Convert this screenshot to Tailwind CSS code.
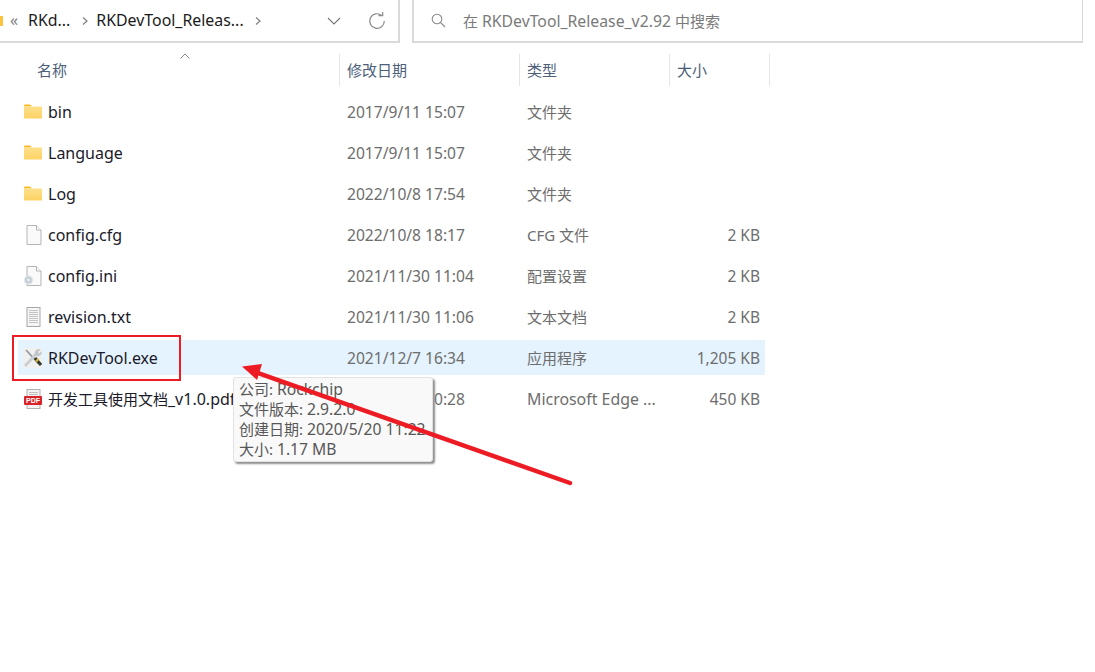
<!DOCTYPE html>
<html lang="zh-CN">
<head>
  <meta charset="UTF-8">
  <title>RKDevTool_Release_v2.92</title>
  <script src="https://cdn.jsdelivr.net/npm/@tailwindcss/browser@4"></script>
</head>
<body class="bg-white w-[1095px] h-[672px] overflow-hidden relative font-['Noto_Sans','Noto_Sans_CJK_SC',sans-serif] text-[15px]">

  <!-- top bar -->
  <div class="flex h-[43px] gap-[12px]">
    <div class="w-[400px] border-r-2 border-b-2 border-[#d9d9d9] flex items-center relative text-[#1a1a1a] text-[15.9px]">
      <div class="w-[3px] h-[10px] bg-[#fcc33d] mt-[1px]"></div>
      <span class="ml-[7px] text-[#808080] w-[18px]">«</span>
      <span>RKd...</span>
      <svg class="ml-[11px]" width="8" height="10" viewBox="0 0 8 10"><path d="M2 1.5 L6 5 L2 8.5" fill="none" stroke="#808080" stroke-width="1.2"/></svg>
      <span class="ml-[7px]">RKDevTool_Releas...</span>
      <svg class="ml-[10px]" width="8" height="10" viewBox="0 0 8 10"><path d="M2 1.5 L6 5 L2 8.5" fill="none" stroke="#808080" stroke-width="1.2"/></svg>
      <svg class="ml-[65px]" width="14" height="8" viewBox="0 0 14 8"><path d="M1 1 L7 7 L13 1" fill="none" stroke="#777" stroke-width="1.1"/></svg>
      <svg class="ml-[27px]" width="18" height="18" viewBox="0 0 18 18"><path d="M13.6 3.4 A7.3 7.3 0 1 0 16.3 9" fill="none" stroke="#8a8a8a" stroke-width="1.2"/><path d="M10.5 3.7 H14.7 V0" fill="none" stroke="#8a8a8a" stroke-width="1.2"/></svg>
    </div>
    <div class="w-[671px] border-l-2 border-b-2 border-r border-[#d9d9d9] flex items-center text-[#7a7a7a] pl-[17px]">
      <svg width="15" height="15" viewBox="0 0 15 15"><circle cx="6" cy="6" r="4.8" fill="none" stroke="#8a8a8a" stroke-width="1.1"/><path d="M9.5 9.5 L14 14" stroke="#8a8a8a" stroke-width="1.1"/></svg>
      <span class="ml-[17px] pt-[2px] whitespace-nowrap">在 <span class="text-[15.8px]">RKDevTool_Release_v2.92</span> 中搜索</span>
    </div>
  </div>

  <!-- column headers -->
  <div class="relative flex h-[32px] mt-[11px] text-[#4c607a]">
    <div class="w-[340px] border-r border-[#e5e5e5] pl-[37px] flex items-center">名称</div>
    <svg class="absolute left-[180px] top-[-1px]" width="10" height="6" viewBox="0 0 10 6"><path d="M0.5 5.5 L5 1 L9.5 5.5" fill="none" stroke="#8a8a8a"/></svg>
    <div class="w-[180px] border-r border-[#e5e5e5] pl-[7px] flex items-center">修改日期</div>
    <div class="w-[150px] border-r border-[#e5e5e5] pl-[7px] flex items-center">类型</div>
    <div class="w-[100px] border-r border-[#e5e5e5] pl-[7px] flex items-center">大小</div>
  </div>

  <!-- file list -->
  <div class="mt-[8px] ml-[18px] w-[747px] flex flex-col gap-[6px] text-[#6d6d6d]">
    <div class="flex items-center h-[35px] pt-[2px]">
      <svg class="ml-[6px] mb-[3px] w-[18px]" width="18" height="15" viewBox="0 0 18 15"><defs><linearGradient id="fld" x1="0" y1="0" x2="0" y2="1"><stop offset="0" stop-color="#fde08a"/><stop offset="1" stop-color="#fdd264"/></linearGradient></defs><path d="M0 1.5 Q0 0.5 1 0.5 H6 L8 2.5 H0 Z" fill="#fbb924"/><rect y="2.5" width="18" height="12" rx="0.5" fill="url(#fld)"/></svg>
      <span class="ml-[6px] mb-[2px] w-[299px] text-[16px] text-[#1a1a2a]">bin</span>
      <span class="w-[180px] text-[15.6px]">2017/9/11 15:07</span>
      <span class="w-[150px]">文件夹</span>
    </div>
    <div class="flex items-center h-[35px] pt-[2px]">
      <svg class="ml-[6px] mb-[3px] w-[18px]" width="18" height="15" viewBox="0 0 18 15"><path d="M0 1.5 Q0 0.5 1 0.5 H6 L8 2.5 H0 Z" fill="#fbb924"/><rect y="2.5" width="18" height="12" rx="0.5" fill="url(#fld)"/></svg>
      <span class="ml-[6px] mb-[2px] w-[299px] text-[16px] text-[#1a1a2a]">Language</span>
      <span class="w-[180px] text-[15.6px]">2017/9/11 15:07</span>
      <span class="w-[150px]">文件夹</span>
    </div>
    <div class="flex items-center h-[35px] pt-[2px]">
      <svg class="ml-[6px] mb-[3px] w-[18px]" width="18" height="15" viewBox="0 0 18 15"><path d="M0 1.5 Q0 0.5 1 0.5 H6 L8 2.5 H0 Z" fill="#fbb924"/><rect y="2.5" width="18" height="12" rx="0.5" fill="url(#fld)"/></svg>
      <span class="ml-[6px] mb-[2px] w-[299px] text-[16px] text-[#1a1a2a]">Log</span>
      <span class="w-[180px] text-[15.6px]">2022/10/8 17:54</span>
      <span class="w-[150px]">文件夹</span>
    </div>
    <div class="flex items-center h-[35px] pt-[2px]">
      <svg class="ml-[8px] mb-[2px] w-[16px]" width="16" height="20" viewBox="0 0 16 20"><path d="M1 0.5 H10.5 L15 5 V19.5 H1 Z" fill="#fafafa" stroke="#b5b5b5"/><path d="M10.5 0.5 V5 H15" fill="#fff" stroke="#b5b5b5"/></svg>
      <span class="ml-[6px] mb-[2px] w-[299px] text-[16px] text-[#1a1a2a]">config.cfg</span>
      <span class="w-[180px] text-[15.6px]">2022/10/8 18:17</span>
      <span class="w-[150px]">CFG 文件</span>
      <span class="w-[83px] text-right text-[15.5px]">2 KB</span>
    </div>
    <div class="flex items-center h-[35px] pt-[2px]">
      <svg class="ml-[5px] mb-[2px] w-[19px]" width="19" height="20" viewBox="0 0 19 20"><path d="M4 0.5 H13.5 L18 5 V19.5 H4 Z" fill="#fafafa" stroke="#b5b5b5"/><path d="M13.5 0.5 V5 H18" fill="#fff" stroke="#b5b5b5"/><circle cx="5.5" cy="14" r="4" fill="#c3ccd4" stroke="#e2e7ea" stroke-width="1.6" stroke-dasharray="2 1"/><circle cx="5.5" cy="14" r="1.4" fill="#eef1f3"/></svg>
      <span class="ml-[6px] mb-[2px] w-[299px] text-[16px] text-[#1a1a2a]">config.ini</span>
      <span class="w-[180px] text-[15.6px]">2021/11/30 11:04</span>
      <span class="w-[150px]">配置设置</span>
      <span class="w-[83px] text-right text-[15.5px]">2 KB</span>
    </div>
    <div class="flex items-center h-[35px] pt-[2px]">
      <svg class="ml-[8px] mb-[2px] w-[16px]" width="16" height="20" viewBox="0 0 16 20"><rect x="1" y="0.5" width="13" height="19" fill="#f5f5f5" stroke="#a8a8a8"/><path d="M3 3.5 H12 M3 5.5 H12 M3 7.5 H12 M3 9.5 H12 M3 11.5 H12 M3 13.5 H12 M3 15.5 H12" stroke="#c4c4c4"/></svg>
      <span class="ml-[6px] mb-[2px] w-[299px] text-[16px] text-[#1a1a2a]">revision.txt</span>
      <span class="w-[180px] text-[15.6px]">2021/11/30 11:06</span>
      <span class="w-[150px]">文本文档</span>
      <span class="w-[83px] text-right text-[15.5px]">2 KB</span>
    </div>
    <div class="flex items-center h-[35px] pt-[2px] bg-[#e5f3ff]">
      <svg class="ml-[5px] mb-[2px] w-[19px]" width="19" height="20" viewBox="0 0 19 20"><rect width="19" height="20" fill="#f0f1ee"/><path d="M3 2 L16 16" stroke="#8f9aa3" stroke-width="1.8"/><path d="M12 10 L18 17" stroke="#3a3a2a" stroke-width="3.2"/><path d="M13.5 11.5 L15 13" stroke="#e3b53a" stroke-width="3.2"/><path d="M2 18 L14 5" stroke="#c9ced2" stroke-width="2.6"/><path d="M12 6.5 A4 4 0 0 1 17.5 1.5 L15 4 L16.5 5.5 L18.6 3 A4 4 0 0 1 13.5 8 Z" fill="#c0c6cb"/></svg>
      <span class="ml-[6px] mb-[2px] w-[299px] text-[16px] text-[#1a1a2a]">RKDevTool.exe</span>
      <span class="w-[180px] text-[15.6px]">2021/12/7 16:34</span>
      <span class="w-[150px]">应用程序</span>
      <span class="w-[83px] text-right text-[15.5px]">1,205 KB</span>
    </div>
    <div class="flex items-center h-[35px] pt-[2px]">
      <svg class="ml-[6px] mb-[2px] w-[18px]" width="18" height="20" viewBox="0 0 18 20"><rect x="3" y="0.5" width="13" height="19" fill="#f2f2f2" stroke="#b0b0b0"/><path d="M5 3.5 H14 M5 5.5 H14" stroke="#c0c0c0"/><rect y="7" width="18" height="9" rx="1" fill="#d8232a"/><text x="9" y="14" text-anchor="middle" font-size="7" font-weight="700" font-family="Liberation Sans" fill="#fff">PDF</text></svg>
      <span class="ml-[6px] mb-[2px] w-[299px] text-[#1a1a2a] whitespace-nowrap">开发工具使用文档<span class="text-[16px]">_v1.0.pdf</span></span>
      <span class="w-[180px] text-[15.6px]">2021/12/7 10:28</span>
      <span class="w-[150px] text-[15.9px] whitespace-nowrap">Microsoft Edge ...</span>
      <span class="w-[83px] text-right text-[15.5px]">450 KB</span>
    </div>
  </div>

  <!-- tooltip -->
  <div class="absolute left-[233px] top-[377px] w-[200px] h-[85px] bg-[#f9f9f9] border border-[#e2e2e2] rounded-[3px] shadow-[2px_2px_2px_#8f8f8f] px-[5px] pt-[1px] text-[#575757] leading-[20px] whitespace-nowrap">
    <div>公司: <span class="text-[15.7px]">Rockchip</span></div>
    <div>文件版本: <span class="text-[15.7px]">2.9.2.0</span></div>
    <div>创建日期: <span class="text-[15.7px]">2020/5/20 11:22</span></div>
    <div>大小: <span class="text-[15.7px]">1.17 MB</span></div>
  </div>

  <!-- red marker + arrow -->
  <div class="absolute left-[12px] top-[335px] w-[169px] h-[46px] border-2 border-[#ed1c24]"></div>
  <svg class="absolute left-0 top-0" width="1095" height="672" viewBox="0 0 1095 672">
    <path d="M570 483 L252 371" stroke="#ed1c24" stroke-width="4.5" stroke-linecap="round"/>
    <path d="M242 366.5 L262 364 L257 380 Z" fill="#ed1c24"/>
  </svg>
</body>
</html>
